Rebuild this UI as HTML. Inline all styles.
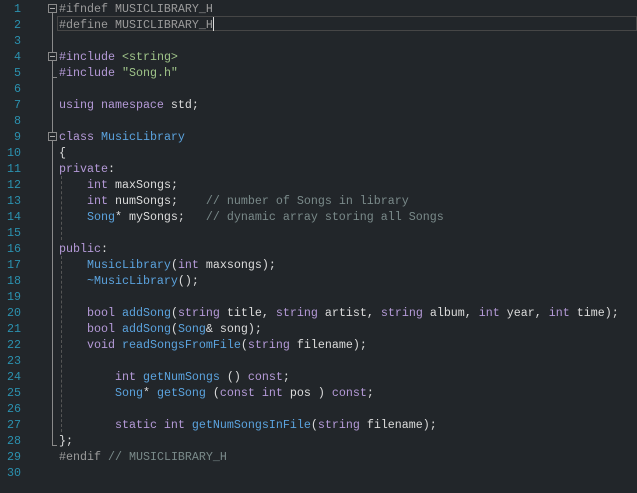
<!DOCTYPE html>
<html><head><meta charset="utf-8"><style>
html,body{margin:0;padding:0;background:#22262a;width:637px;height:493px;overflow:hidden}
.ln{position:absolute;left:0;width:21px;text-align:right;color:#2b91af}
.c{position:absolute;left:59px;white-space:pre;color:#dcdcdc}
div{font-family:"Liberation Mono",monospace;font-size:11.67px;line-height:16px}
.k{color:#b59ad8}.p{color:#9b9b9b}.f{color:#5ba3de}.s{color:#9fc489}.m{color:#7a8a8a}
.box{position:absolute;left:48px;width:7px;height:7px;border:1px solid #8a8a8a;background:#22262a}
.box:after{content:"";position:absolute;left:1px;top:3px;width:5px;height:1px;background:#aaa}
.vl{position:absolute;width:1px;background:#8a8a8a}
.dg{position:absolute;width:0;border-left:1px dashed #555}
</style></head><body>
<div style="position:absolute;left:57px;top:16px;width:580px;height:15px;border:1px solid #464646;box-sizing:border-box"></div>
<div style="position:absolute;left:213px;top:17px;width:1px;height:14px;background:#dcdcdc"></div>
<div class="vl" style="left:52px;top:13px;height:433px"></div>
<div class="vl" style="left:52px;top:445px;width:5px;height:1px"></div>
<div class="vl" style="left:52px;top:77px;width:5px;height:1px"></div>
<div class="dg" style="left:61px;top:176px;height:64px"></div>
<div class="dg" style="left:61px;top:256px;height:176px"></div>
<div class="box" style="top:4px"></div>
<div class="box" style="top:52px"></div>
<div class="box" style="top:132px"></div>
<div class="ln" style="top:1px">1</div><div class="c" style="top:1px"><span class="p">#ifndef MUSICLIBRARY_H</span></div>
<div class="ln" style="top:17px">2</div><div class="c" style="top:17px"><span class="p">#define MUSICLIBRARY_H</span></div>
<div class="ln" style="top:33px">3</div>
<div class="ln" style="top:49px">4</div><div class="c" style="top:49px"><span class="k">#include</span> <span class="s">&lt;string&gt;</span></div>
<div class="ln" style="top:65px">5</div><div class="c" style="top:65px"><span class="k">#include</span> <span class="s">"Song.h"</span></div>
<div class="ln" style="top:81px">6</div>
<div class="ln" style="top:97px">7</div><div class="c" style="top:97px"><span class="k">using namespace</span> std;</div>
<div class="ln" style="top:113px">8</div>
<div class="ln" style="top:129px">9</div><div class="c" style="top:129px"><span class="k">class</span> <span class="f">MusicLibrary</span></div>
<div class="ln" style="top:145px">10</div><div class="c" style="top:145px">{</div>
<div class="ln" style="top:161px">11</div><div class="c" style="top:161px"><span class="k">private</span>:</div>
<div class="ln" style="top:177px">12</div><div class="c" style="top:177px">    <span class="k">int</span> maxSongs;</div>
<div class="ln" style="top:193px">13</div><div class="c" style="top:193px">    <span class="k">int</span> numSongs;    <span class="m">// number of Songs in library</span></div>
<div class="ln" style="top:209px">14</div><div class="c" style="top:209px">    <span class="f">Song</span>* mySongs;   <span class="m">// dynamic array storing all Songs</span></div>
<div class="ln" style="top:225px">15</div>
<div class="ln" style="top:241px">16</div><div class="c" style="top:241px"><span class="k">public</span>:</div>
<div class="ln" style="top:257px">17</div><div class="c" style="top:257px">    <span class="f">MusicLibrary</span>(<span class="k">int</span> maxsongs);</div>
<div class="ln" style="top:273px">18</div><div class="c" style="top:273px">    <span class="f">~MusicLibrary</span>();</div>
<div class="ln" style="top:289px">19</div>
<div class="ln" style="top:305px">20</div><div class="c" style="top:305px">    <span class="k">bool</span> <span class="f">addSong</span>(<span class="k">string</span> title, <span class="k">string</span> artist, <span class="k">string</span> album, <span class="k">int</span> year, <span class="k">int</span> time);</div>
<div class="ln" style="top:321px">21</div><div class="c" style="top:321px">    <span class="k">bool</span> <span class="f">addSong</span>(<span class="f">Song</span>&amp; song);</div>
<div class="ln" style="top:337px">22</div><div class="c" style="top:337px">    <span class="k">void</span> <span class="f">readSongsFromFile</span>(<span class="k">string</span> filename);</div>
<div class="ln" style="top:353px">23</div>
<div class="ln" style="top:369px">24</div><div class="c" style="top:369px">        <span class="k">int</span> <span class="f">getNumSongs</span> () <span class="k">const</span>;</div>
<div class="ln" style="top:385px">25</div><div class="c" style="top:385px">        <span class="f">Song</span>* <span class="f">getSong</span> (<span class="k">const int</span> pos ) <span class="k">const</span>;</div>
<div class="ln" style="top:401px">26</div>
<div class="ln" style="top:417px">27</div><div class="c" style="top:417px">        <span class="k">static int</span> <span class="f">getNumSongsInFile</span>(<span class="k">string</span> filename);</div>
<div class="ln" style="top:433px">28</div><div class="c" style="top:433px">};</div>
<div class="ln" style="top:449px">29</div><div class="c" style="top:449px"><span class="p">#endif</span> <span class="m">// MUSICLIBRARY_H</span></div>
<div class="ln" style="top:465px">30</div>
</body></html>
